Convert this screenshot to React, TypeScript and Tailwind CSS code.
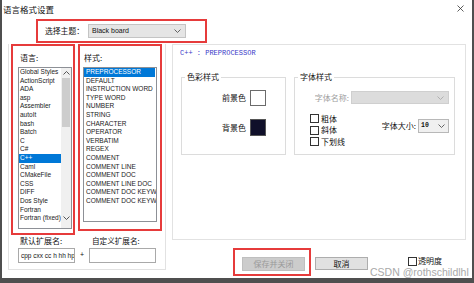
import React from "react";

const langs = [
  "Global Styles",
  "ActionScript",
  "ADA",
  "asp",
  "Assembler",
  "autoIt",
  "bash",
  "Batch",
  "C",
  "C#",
  "C++",
  "Caml",
  "CMakeFile",
  "CSS",
  "DIFF",
  "Dos Style",
  "Fortran",
  "Fortran (fixed)",
];

const styles = [
  "PREPROCESSOR",
  "DEFAULT",
  "INSTRUCTION WORD",
  "TYPE WORD",
  "NUMBER",
  "STRING",
  "CHARACTER",
  "OPERATOR",
  "VERBATIM",
  "REGEX",
  "COMMENT",
  "COMMENT LINE",
  "COMMENT DOC",
  "COMMENT LINE DOC",
  "COMMENT DOC KEYWORD",
  "COMMENT DOC KEYWORD ERROR",
];

function ChevronDown({ color = "#555" }: { color?: string }) {
  return (
    <svg width="7" height="4" viewBox="0 0 7 4" className="shrink-0">
      <polyline points="0.5,0.5 3.5,3.5 6.5,0.5" fill="none" stroke={color} strokeWidth="0.9" />
    </svg>
  );
}

function ChevronUp({ color = "#555" }: { color?: string }) {
  return (
    <svg width="7" height="4" viewBox="0 0 7 4" className="shrink-0">
      <polyline points="0.5,3.5 3.5,0.5 6.5,3.5" fill="none" stroke={color} strokeWidth="0.9" />
    </svg>
  );
}

function Check({ label }: { label: string }) {
  return (
    <div className="flex items-center gap-[2px] h-[11.5px]">
      <div className="w-[9px] h-[9px] border border-[#333] bg-white shrink-0" />
      <span className="leading-[10px]">{label}</span>
    </div>
  );
}

const latin = "font-['Liberation_Sans','Noto_Sans_CJK_SC',sans-serif]";

export default function App() {
  return (
    <div className="w-[474px] h-[283px] bg-[#4f4f4f] pl-[2px] pr-[2px] pb-[5px] overflow-hidden font-['Noto_Sans_CJK_SC',sans-serif] text-[8px] text-[#111]">
      <div className="relative w-full h-full bg-white flex flex-col">
        {/* title bar */}
        <div className="h-[19px] shrink-0 flex items-start justify-between pl-[1px] pr-[8px]">
          <span className="mt-[4px] leading-[11px] text-[8.5px]">语言格式设置</span>
          <svg width="7" height="7" viewBox="0 0 7 7" className="mt-[5px]">
            <line x1="0.5" y1="0.5" x2="6.5" y2="6.5" stroke="#333" strokeWidth="0.8" />
            <line x1="6.5" y1="0.5" x2="0.5" y2="6.5" stroke="#333" strokeWidth="0.8" />
          </svg>
        </div>

        {/* theme */}
        <div className="ml-[34px] w-[171px] h-[24px] shrink-0 border-2 border-[#e63b3b] flex items-center pl-[7px] gap-[4px]">
          <span className="text-[7.8px] leading-[10px]">选择主题：</span>
          <div className="w-[98px] h-[14px] bg-[#e5e5e5] border border-[#c4c4c4] flex items-center justify-between pl-[3px] pr-[4px]">
            <span className={`${latin} text-[7px] leading-[10px]`}>Black board</span>
            <ChevronDown />
          </div>
        </div>

        {/* body */}
        <div className="flex mt-[1px] flex-1">
          {/* left panel */}
          <div className="ml-[6px] w-[158px] h-[226px] border-x border-b border-[#e2e2e2] flex flex-col">
            <div className="flex items-start pl-[2px] gap-[3px]">
              {/* language */}
              <div className="w-[64px] h-[191px] border-2 border-[#e63b3b] flex flex-col pl-[5px]">
                <span className="ml-[2px] mt-[7px] leading-[10px]">语言:</span>
                <div className="mt-[4px] w-[54px] h-[162px] border border-[#8d9096] bg-white flex">
                  <div className={`flex-1 overflow-hidden ${latin} text-[6.5px] text-[#1a1a1a]`}>
                    {langs.map((l) => (
                      <div
                        key={l}
                        className={`h-[8.6px] leading-[8.6px] pl-[1px] whitespace-nowrap ${
                          l === "C++" ? "bg-[#0078d7] text-white" : ""
                        }`}
                      >
                        {l}
                      </div>
                    ))}
                  </div>
                  <div className="w-[10px] bg-[#f0f0f0] flex flex-col items-center">
                    <div className="h-[10px] flex items-center">
                      <ChevronUp color="#444" />
                    </div>
                    <div className="w-[8px] h-[49px] bg-[#cdcdcd]" />
                    <div className="flex-1" />
                    <div className="h-[10px] flex items-center mb-[5px]">
                      <ChevronDown color="#444" />
                    </div>
                  </div>
                </div>
              </div>

              {/* styles */}
              <div className="w-[84px] h-[187px] border-2 border-[#e63b3b] flex flex-col pl-[3px]">
                <span className="ml-[1px] mt-[7px] leading-[10px]">样式:</span>
                <div className="mt-[4px] w-[74px] h-[155px] border border-[#8d9096] bg-white overflow-hidden">
                  <div className={`${latin} text-[6.5px] text-[#1a1a1a]`}>
                    {styles.map((s, i) => (
                      <div
                        key={s}
                        className={`h-[8.6px] leading-[8.6px] pl-[2px] whitespace-nowrap overflow-hidden ${
                          i === 0 ? "bg-[#0078d7] text-white mr-[1px]" : ""
                        }`}
                      >
                        {s}
                      </div>
                    ))}
                  </div>
                </div>
              </div>
            </div>

            {/* extensions */}
            <div className="flex mt-[1px] pl-[11px] leading-[10px]">
              <span className="w-[72px]">默认扩展名:</span>
              <span className="text-[7.6px]">自定义扩展名:</span>
            </div>
            <div className="flex items-center mt-[2px] pl-[9px]">
              <div className={`w-[57px] h-[15px] border border-[#a9a9a9] bg-white overflow-hidden whitespace-nowrap pl-[2px] ${latin} text-[6.5px] leading-[13px]`}>
                cpp cxx cc h hh hpp
              </div>
              <span className={`w-[14px] text-center ${latin} text-[7px]`}>+</span>
              <div className="w-[67px] h-[15px] border border-[#a9a9a9] bg-white" />
            </div>
          </div>

          {/* right column */}
          <div className="ml-[6px] w-[294px] flex flex-col">
            <div className="h-[196px] border border-[#e2e2e2] bg-white flex flex-col">
              <div className="pl-[7px] pt-[4px] leading-[9px] font-['Liberation_Mono',monospace] text-[7px] text-[#3a3ac8]">
                C++ : PREPROCESSOR
              </div>
              <div className="flex gap-[8px] pl-[8px] mt-[14px]">
                <fieldset className="w-[105px] h-[83px] border border-[#dcdcdc] m-0 p-0">
                  <legend className="ml-[3px] px-[2px] leading-[10px]">色彩样式</legend>
                  <div className="flex flex-col items-end pr-[19px] pt-[8px] gap-[13px]">
                    <div className="flex items-center gap-[4px]">
                      <span className="leading-[10px]">前景色</span>
                      <div className="w-[16px] h-[16px] border border-[#6b6b6b] bg-white" />
                    </div>
                    <div className="flex items-center gap-[4px]">
                      <span className="leading-[10px]">背景色</span>
                      <div className="w-[16px] h-[17px] border border-[#555] bg-[#10102a]" />
                    </div>
                  </div>
                </fieldset>
                <fieldset className="w-[161px] h-[83px] border border-[#dcdcdc] m-0 p-0">
                  <legend className="ml-[3px] px-[2px] leading-[10px]">字体样式</legend>
                  <div className="flex justify-end items-center gap-[2px] pr-[5px] pt-[9px]">
                    <span className="leading-[10px] text-[#a0a0a0]">字体名称:</span>
                    <div className="w-[98px] h-[13px] bg-[#dcdcdc] border border-[#cfcfcf] flex items-center justify-end pr-[4px]">
                      <ChevronDown color="#aaa" />
                    </div>
                  </div>
                  <div className="flex mt-[9px] pl-[15px] pr-[5px]">
                    <div className="flex flex-col">
                      <Check label="粗体" />
                      <Check label="斜体" />
                      <Check label="下划线" />
                    </div>
                    <div className="ml-auto mt-[6px] flex items-center gap-[2px] self-start">
                      <span className="leading-[10px]">字体大小:</span>
                      <div className="w-[31px] h-[14px] bg-[#f0f0f0] border border-[#b8b8b8] flex items-center justify-between pl-[2px] pr-[3px]">
                        <span className="font-['Liberation_Mono',monospace] font-bold text-[6.5px] leading-[10px]">10</span>
                        <ChevronDown />
                      </div>
                    </div>
                  </div>
                </fieldset>
              </div>
            </div>

            {/* buttons */}
            <div className="flex items-start mt-[8px]">
              <div className="ml-[61px] w-[78px] h-[28px] border-2 border-[#e63b3b] p-[7px]">
                <div className="w-[63px] h-[14px] bg-[#cccccc] border border-[#bfbfbf] flex items-center justify-center text-[#9a9a9a] leading-[10px]">
                  保存并关闭
                </div>
              </div>
              <div className="ml-[4px] mt-[9px] w-[53px] h-[13px] bg-[#e1e1e1] border border-[#adadad] flex items-center justify-center leading-[10px]">
                取消
              </div>
              <div className="ml-[40px] mt-[8px] flex items-center gap-[1px]">
                <div className="w-[9px] h-[9px] border border-[#333] bg-white" />
                <span className="leading-[10px]">透明度</span>
              </div>
            </div>
          </div>
        </div>

        {/* watermark */}
        <span className={`absolute left-[368px] top-[266px] ${latin} text-[10.5px] leading-[12px] text-[#a9a9a9] whitespace-nowrap`}>
          CSDN @rothschildlhl
        </span>
      </div>
    </div>
  );
}
